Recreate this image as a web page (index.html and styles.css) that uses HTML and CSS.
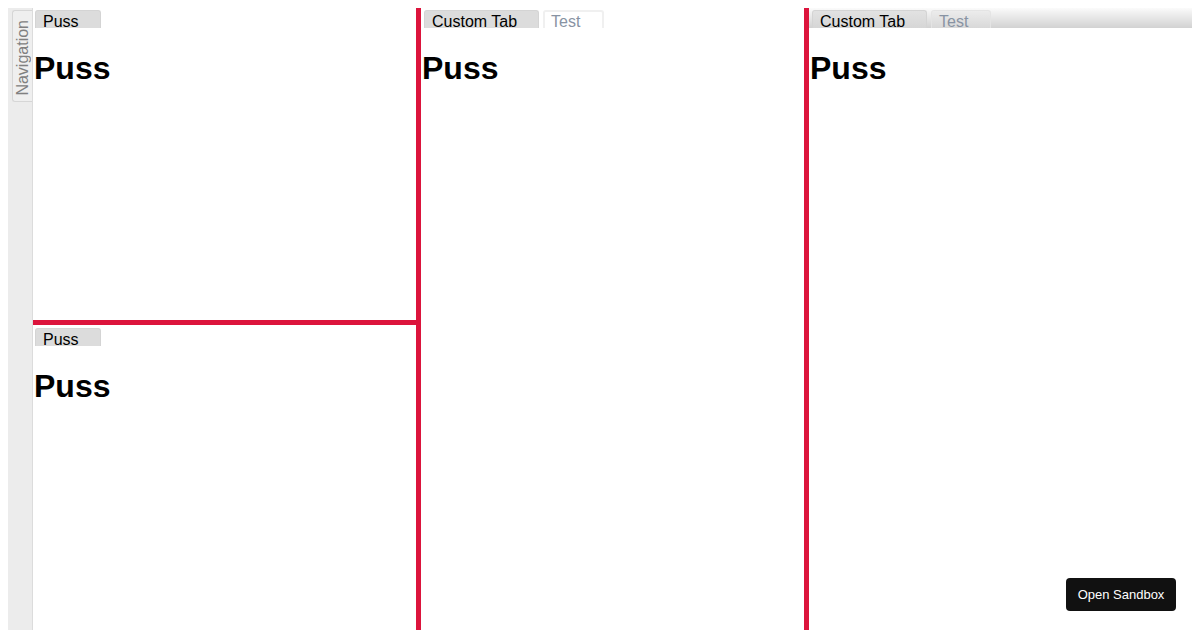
FILE: index.html
```html
<!DOCTYPE html>
<html>
<head>
<meta charset="utf-8">
<link rel="stylesheet" href="styles.css">
</head>
<body>
<div class="app">
  <div class="sidebar">
    <div class="navtab"><span class="navtext">Navigation</span></div>
  </div>
  <div class="column split-col">
    <div class="panel top-panel">
      <div class="tabstrip"><div class="tab active">Puss</div></div>
      <h1 class="title">Puss</h1>
    </div>
    <div class="hsplit"></div>
    <div class="panel bottom-panel">
      <div class="tabstrip"><div class="tab active">Puss</div></div>
      <h1 class="title">Puss</h1>
    </div>
  </div>
  <div class="vsplit"></div>
  <div class="column">
    <div class="panel">
      <div class="tabstrip strip-pad"><div class="tab active">Custom Tab</div><div class="tab inactive">Test</div></div>
      <h1 class="title">Puss</h1>
    </div>
  </div>
  <div class="vsplit"></div>
  <div class="column">
    <div class="panel">
      <div class="tabstrip strip-pad gradient"><div class="tab active grad-active">Custom Tab</div><div class="tab inactive grad-inactive">Test</div></div>
      <h1 class="title">Puss</h1>
    </div>
  </div>
</div>
<button class="sandbox">Open Sandbox</button>
</body>
</html>
```
FILE: styles.css
```css
html, body {
  height: 100%;
}
body {
  margin: 8px 8px 0 8px;
  font-family: "Liberation Sans", Arial, sans-serif;
  background: #fff;
  overflow: hidden;
}
.app {
  display: flex;
  height: calc(100vh - 8px);
}
.sidebar {
  width: 24px;
  background: #ececec;
  border-right: 1px solid #dcdcdc;
  display: flex;
  flex-direction: column;
  align-items: flex-end;
  padding-top: 2px;
  box-sizing: content-box;
}
.navtab {
  width: 19px;
  height: 90px;
  background: #efefef;
  border: 1px solid #d6d6d6;
  border-right: none;
  border-radius: 3px 0 0 3px;
  display: flex;
  align-items: center;
  justify-content: center;
}
.navtext {
  writing-mode: vertical-rl;
  transform: rotate(180deg);
  font-size: 16px;
  color: #808080;
  line-height: 19px;
  padding-bottom: 3px;
}
.column {
  flex: 1;
  min-width: 0;
  display: flex;
  flex-direction: column;
}
.panel {
  flex: 1;
  min-height: 0;
}
.top-panel {
  flex: 0 0 312px;
}
.bottom-panel {
  padding-top: 1px;
}
.hsplit {
  height: 5px;
  background: #dc143c;
}
.vsplit {
  width: 5px;
  background: #dc143c;
}
.tabstrip {
  display: flex;
  gap: 4px;
  height: 20px;
  padding-left: 2px;
  box-sizing: border-box;
  align-items: flex-end;
}
.strip-pad {
  padding-left: 3px;
}
.gradient {
  background: linear-gradient(#fbfbfb, #f2f2f2 20%, #d2d2d2);
}
.tab {
  height: 18px;
  padding-top: 3px;
  line-height: 15px;
  font-size: 16px;
  padding-right: 21px;
  border-radius: 3px 3px 0 0;
  box-sizing: border-box;
  white-space: nowrap;
}
.active {
  background: #dcdcdc;
  color: #000;
  border: 1px solid #d4d4d4;
  border-bottom: none;
  padding-left: 7px;
}
.inactive {
  background: #fff;
  color: #8893a3;
  border: 2px solid #f0f0f0;
  border-bottom: none;
  padding-top: 2px;
  padding-left: 6px;
  padding-right: 22px;
}
.grad-active {
  background: linear-gradient(#e2e2e2, #d6d6d6);
}
.grad-inactive {
  background: linear-gradient(#ececec, #d8d8d8);
  border: 1px solid #e4e4e4;
  border-bottom: none;
  padding-top: 3px;
  padding-left: 7px;
  padding-right: 22px;
}
.title {
  font-size: 32px;
  font-weight: bold;
  margin: 22px 0 0 1px;
  color: #000;
}
.sandbox {
  position: fixed;
  right: 24px;
  bottom: 19px;
  width: 110px;
  height: 33px;
  background: #111;
  color: #fff;
  border: none;
  border-radius: 4px;
  font-family: "Liberation Sans", Arial, sans-serif;
  font-size: 13px;
  padding: 0;
}
```
